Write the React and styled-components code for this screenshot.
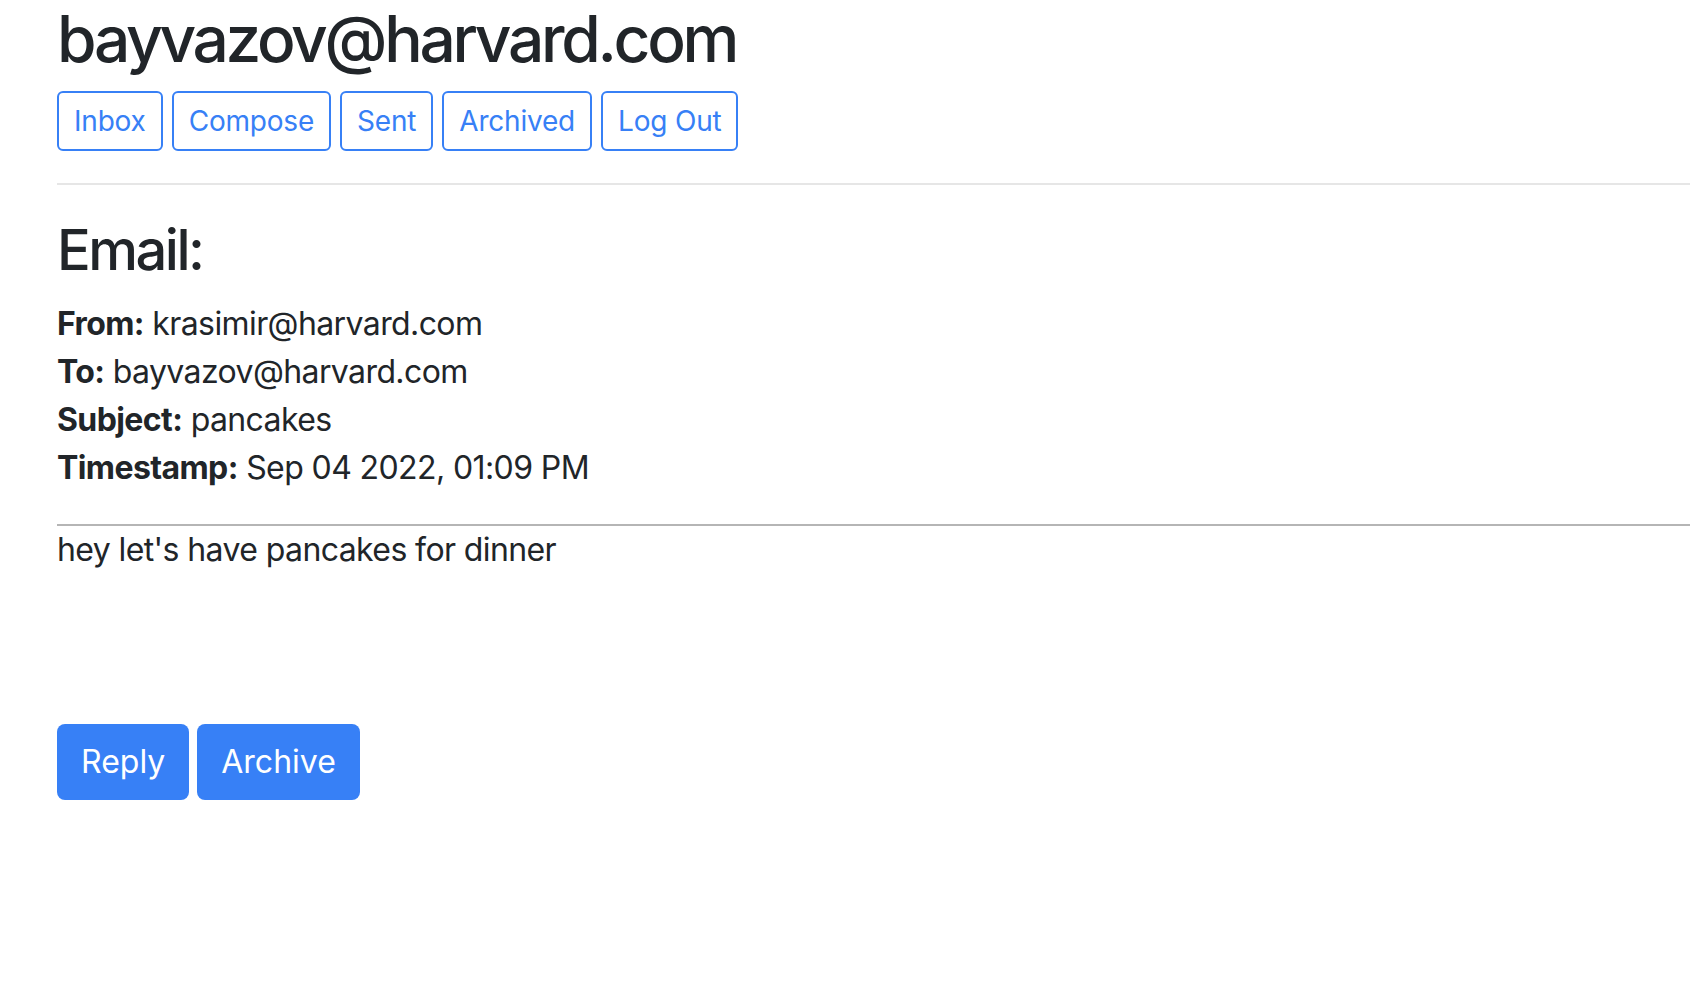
import styled, { createGlobalStyle } from 'styled-components';

const NAV = ['Inbox', 'Compose', 'Sent', 'Archived', 'Log Out'];

const EMAIL = {
  sender: 'krasimir@harvard.com',
  recipients: 'bayvazov@harvard.com',
  subject: 'pancakes',
  timestamp: 'Sep 04 2022, 01:09 PM',
  body: "hey let's have pancakes for dinner",
};

const GlobalStyle = createGlobalStyle`
  html, body {
    margin: 0;
    padding: 0;
    background: #fff;
  }
  body {
    font-family: Inter, "Liberation Sans", Arial, sans-serif;
    color: #212529;
    font-size: 32px;
    line-height: 48px;
    letter-spacing: -0.6px;
    overflow-x: hidden;
  }
`;

export default function App() {
  return (
    <Page>
      <GlobalStyle />
      <UserTitle>bayvazov@harvard.com</UserTitle>

      <Nav>
        {NAV.map((label) => (
          <NavBtn key={label}>{label}</NavBtn>
        ))}
      </Nav>

      <Rule />

      <EmailView>
        <EmailTitle>Email:</EmailTitle>
        <Meta>
          <b>From:</b> {EMAIL.sender}
        </Meta>
        <Meta>
          <b>To:</b> {EMAIL.recipients}
        </Meta>
        <Meta>
          <b>Subject:</b> {EMAIL.subject}
        </Meta>
        <Meta>
          <b>Timestamp:</b> {EMAIL.timestamp}
        </Meta>

        <BodyRule />
        <Body>{EMAIL.body}</Body>

        <Actions>
          <PrimaryBtn>Reply</PrimaryBtn>
          <PrimaryBtn>Archive</PrimaryBtn>
        </Actions>
      </EmailView>
    </Page>
  );
}

const Page = styled.div`
  padding-left: 57px;
  min-height: 983px;
`;

const UserTitle = styled.h2`
  margin: 0 0 14px;
  font-size: 64px;
  line-height: 77px;
  font-weight: 500;
  letter-spacing: -3.3px;
`;

const Nav = styled.div`
  display: flex;
  gap: 9px;
`;

const NavBtn = styled.button`
  height: 60px;
  padding: 0 15px;
  border: 2px solid #3780f6;
  border-radius: 6px;
  background: #fff;
  color: #3780f6;
  font-family: inherit;
  font-size: 28px;
  line-height: 1;
  letter-spacing: -0.2px;
  cursor: pointer;
`;

const Rule = styled.hr`
  margin: 32px 0 0;
  border: none;
  border-top: 2px solid #e6e6e6;
`;

const EmailView = styled.div`
  padding-top: 32px;
`;

const EmailTitle = styled.h3`
  margin: 0 0 16px;
  font-size: 56px;
  line-height: 67px;
  font-weight: 500;
  letter-spacing: -2.5px;
`;

const Meta = styled.div`
  b {
    font-weight: 700;
  }
`;

const BodyRule = styled.hr`
  margin: 32px 0 0;
  border: none;
  border-top: 2px solid #b5b5b5;
`;

const Body = styled.div``;

const Actions = styled.div`
  display: flex;
  gap: 8px;
  margin-top: 150px;
`;

const PrimaryBtn = styled.button`
  height: 76px;
  padding: 0 24px;
  border: none;
  border-radius: 8px;
  background: #3780f6;
  color: #fff;
  font-family: inherit;
  font-size: 32px;
  line-height: 1;
  letter-spacing: 0;
  cursor: pointer;
`;
